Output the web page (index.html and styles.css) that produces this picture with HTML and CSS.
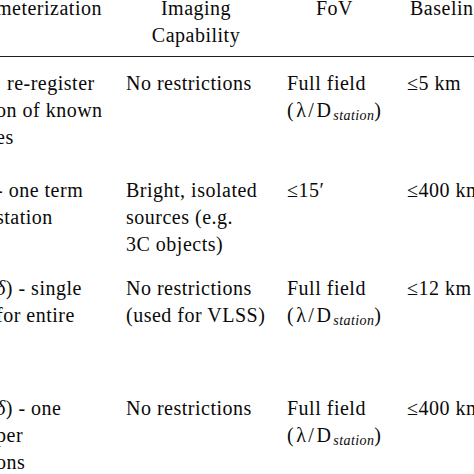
FILE: index.html
```html
<!DOCTYPE html>
<html>
<head>
<meta charset="utf-8">
<link rel="stylesheet" href="styles.css">
</head>
<body>
<div class="crop">
  <div class="tbl">
    <div class="trow head">
      <div class="c1"><div>meterization</div></div>
      <div class="c2 hc2"><div>Imaging</div><div>Capability</div></div>
      <div class="c3 hc3"><div>FoV</div></div>
      <div class="c4 hc4"><div>Baselines</div></div>
    </div>
    <div class="rule"></div>
    <div class="trow r1">
      <div class="c1"><div class="ind">re-register</div><div>on of known</div><div>es</div></div>
      <div class="c2"><div>No restrictions</div></div>
      <div class="c3"><div>Full field</div><div><span class="ld">(λ/D</span><span class="sub">station</span>)</div></div>
      <div class="c4"><div>≤5 km</div></div>
    </div>
    <div class="trow r2">
      <div class="c1"><div>- one term</div><div>station</div></div>
      <div class="c2"><div>Bright, isolated</div><div>sources (e.g.</div><div>3C objects)</div></div>
      <div class="c3"><div>≤15′</div></div>
      <div class="c4"><div>≤400 km</div></div>
    </div>
    <div class="trow r3">
      <div class="c1"><div><i class="m">δ</i>) - single</div><div>for entire</div></div>
      <div class="c2"><div>No restrictions</div><div>(used for VLSS)</div></div>
      <div class="c3"><div>Full field</div><div><span class="ld">(λ/D</span><span class="sub">station</span>)</div></div>
      <div class="c4"><div>≤12 km</div></div>
    </div>
    <div class="trow r4">
      <div class="c1"><div><i class="m">δ</i>) - one</div><div>per</div><div>ons</div></div>
      <div class="c2"><div>No restrictions</div></div>
      <div class="c3"><div>Full field</div><div><span class="ld">(λ/D</span><span class="sub">station</span>)</div></div>
      <div class="c4"><div>≤400 km</div></div>
    </div>
  </div>
</div>
</body>
</html>
```
FILE: styles.css
```css
html, body {
  margin: 0;
  padding: 0;
  background: #ffffff;
}

.crop {
  width: 474px;
  height: 474px;
  overflow: hidden;
  background: #ffffff;
}

.tbl {
  margin-top: -5px;
  width: 640px;
  font-family: "Liberation Serif", serif;
  font-size: 20px;
  letter-spacing: 0.5px;
  line-height: 27px;
  color: #0a0a0a;
}

.trow {
  display: grid;
  grid-template-columns: 126px 161px 120px 233px;
  align-items: start;
}

.trow > div {
  white-space: nowrap;
}

.c1 {
  margin-left: -4px;
}

.ind {
  padding-left: 11px;
}

.hc2 {
  text-align: center;
  padding-right: 21px;
}

.hc3 {
  text-align: center;
  padding-right: 25px;
}

.hc4 {
  padding-left: 3px;
}

.head {
  padding-bottom: 7px;
}

.rule {
  height: 1px;
  background: #1e1e1e;
  margin-bottom: 13px;
}

.r1 { height: 107px; }
.r2 { height: 98px; }
.r3 { height: 120px; }
.r4 { height: 120px; }

.ld {
  letter-spacing: 2.5px;
}

.sub {
  font-family: "Liberation Serif", serif;
  font-style: italic;
  font-size: 14px;
  letter-spacing: 0.4px;
  vertical-align: -3px;
  line-height: 0;
}

.m {
  font-family: "Liberation Serif", serif;
  font-style: italic;
}
```
